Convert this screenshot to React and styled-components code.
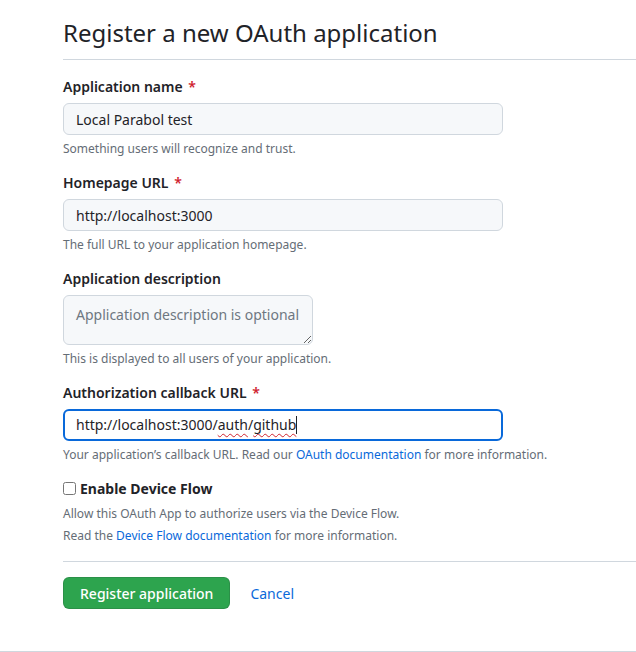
import React from 'react';
import styled, { createGlobalStyle } from 'styled-components';

const GlobalStyle = createGlobalStyle`
  html, body {
    margin: 0;
    padding: 0;
    background: #fff;
  }
  body {
    font-family: "Noto Sans", "Liberation Sans", sans-serif;
    font-size: 14px;
    color: #1f2328;
  }
`;

const Page = styled.div`
  width: 636px;
  height: 652px;
  overflow: hidden;
  border-bottom: 1px solid #d0d7de;
  box-sizing: border-box;
`;

const Content = styled.div`
  padding: 15px 0 0 63px;
`;

const Header = styled.div`
  padding-bottom: 8px;
  border-bottom: 1px solid #d0d7de;
  margin-bottom: 16px;
`;

const Title = styled.h2`
  margin: 0;
  font-size: 24px;
  font-weight: 400;
  line-height: 36px;
`;

const FormGroup = styled.div`
  margin-bottom: 14px;
`;

const Label = styled.label`
  display: block;
  font-size: 14px;
  font-weight: 600;
  line-height: 21px;
  margin-bottom: 6px;
`;

const Required = styled.span`
  color: #cf222e;
  margin-left: 2px;
`;

const Input = styled.input`
  display: block;
  box-sizing: border-box;
  width: 440px;
  height: 32px;
  padding: 5px 12px;
  font-family: inherit;
  font-size: 14px;
  line-height: 20px;
  color: #1f2328;
  background: #f6f8fa;
  border: 1px solid #d0d7de;
  border-radius: 6px;
  outline: none;
`;

const FocusedInput = styled.div`
  box-sizing: border-box;
  width: 440px;
  height: 32px;
  padding: 4px 11px;
  font-size: 14px;
  line-height: 22px;
  background: #fff;
  border: 2px solid #0969da;
  border-radius: 6px;
  display: flex;
  align-items: center;
  white-space: pre;
`;

const Misspelled = styled.span`
  text-decoration: underline wavy #d1242f;
  text-decoration-thickness: 1px;
  text-underline-offset: 3px;
`;

const Caret = styled.span`
  display: inline-block;
  width: 1px;
  height: 18px;
  background: #1f2328;
`;

const TextArea = styled.textarea`
  display: block;
  box-sizing: border-box;
  width: 250px;
  height: 50px;
  padding: 9px 12px 5px;
  font-family: inherit;
  font-size: 14px;
  line-height: 20px;
  color: #1f2328;
  background: #f6f8fa;
  border: 1px solid #d0d7de;
  border-radius: 6px;
  outline: none;
  &::placeholder {
    color: #6e7781;
  }
`;

const Note = styled.p`
  margin: 5px 0 0;
  font-size: 12px;
  line-height: 18px;
  color: #656d76;
`;

const DeviceNote = styled(Note)`
  margin-top: 4px;
`;

const Link = styled.a`
  color: #0969da;
  text-decoration: none;
`;

const CheckRow = styled.label`
  display: flex;
  align-items: center;
  font-size: 14px;
  font-weight: 700;
  line-height: 21px;
  margin-bottom: 6px;
`;

const Checkbox = styled.input`
  margin: 0 4px 0 0;
  width: 13px;
  height: 13px;
`;

const Divider = styled.hr`
  margin: 16px 0 15px;
  border: 0;
  border-top: 1px solid #d0d7de;
`;

const Actions = styled.div`
  display: flex;
  align-items: center;
  gap: 20px;
`;

const PrimaryButton = styled.button`
  box-sizing: border-box;
  height: 32px;
  padding: 0 16px;
  font-family: inherit;
  font-size: 14px;
  font-weight: 500;
  color: #fff;
  background: #2da44e;
  border: 1px solid rgba(31, 35, 40, 0.15);
  border-radius: 6px;
`;

const fields = [
  { label: 'Application name', required: true, value: 'Local Parabol test', note: 'Something users will recognize and trust.' },
  { label: 'Homepage URL', required: true, value: 'http://localhost:3000', note: 'The full URL to your application homepage.' },
];

export default function App() {
  return (
    <Page>
      <GlobalStyle />
      <Content>
        <Header>
          <Title>Register a new OAuth application</Title>
        </Header>

        {fields.map(f => (
          <FormGroup key={f.label}>
            <Label>
              {f.label}
              {f.required && <Required> *</Required>}
            </Label>
            <Input defaultValue={f.value} spellCheck={false} />
            <Note>{f.note}</Note>
          </FormGroup>
        ))}

        <FormGroup>
          <Label>Application description</Label>
          <TextArea placeholder="Application description is optional" />
          <Note>This is displayed to all users of your application.</Note>
        </FormGroup>

        <FormGroup>
          <Label>
            Authorization callback URL<Required> *</Required>
          </Label>
          <FocusedInput>
            http://localhost:3000/<Misspelled>auth</Misspelled>/<Misspelled>github</Misspelled>
            <Caret />
          </FocusedInput>
          <Note>
            Your application’s callback URL. Read our <Link href="#">OAuth documentation</Link> for more information.
          </Note>
        </FormGroup>

        <div>
          <CheckRow>
            <Checkbox type="checkbox" />
            Enable Device Flow
          </CheckRow>
          <DeviceNote>Allow this OAuth App to authorize users via the Device Flow.</DeviceNote>
          <DeviceNote>
            Read the <Link href="#">Device Flow documentation</Link> for more information.
          </DeviceNote>
        </div>

        <Divider />

        <Actions>
          <PrimaryButton>Register application</PrimaryButton>
          <Link href="#">Cancel</Link>
        </Actions>
      </Content>
    </Page>
  );
}
